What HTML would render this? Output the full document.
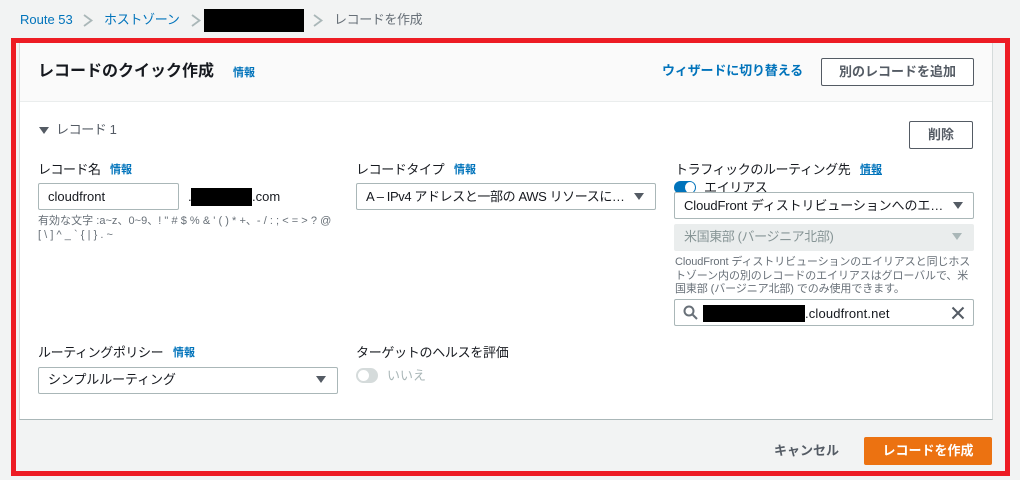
<!DOCTYPE html>
<html lang="ja"><head><meta charset="utf-8"><title>レコードを作成</title>
<style>
*{box-sizing:border-box}
html,body{margin:0;padding:0}
body{width:1020px;height:480px;position:relative;overflow:hidden;background:#f2f3f3;font-family:"Liberation Sans","Noto Sans CJK JP",sans-serif;color:#16191f;font-size:13px}
.a{position:absolute;white-space:nowrap;line-height:18px}
.l{color:#0073bb}
.i{font-size:11px;font-weight:bold;color:#0073bb}
.g{color:#687078}
.b{position:absolute;background:#000}
.box{position:absolute;background:#fff;border:1px solid #aab7b8;border-radius:2px;height:27px}
.btn{position:absolute;background:#fff;border:1px solid #545b64;border-radius:2px;color:#545b64;font-weight:bold;font-size:13px;text-align:center;line-height:26px}
.tri{position:absolute;width:0;height:0;border-left:5px solid transparent;border-right:5px solid transparent;border-top:7px solid #545b64}
svg{position:absolute}
</style></head><body>
<div class="a l" style="left:20px;top:11px">Route 53</div>
<svg style="left:83px;top:13px" width="12" height="15" fill="none" stroke="#aab7b8" stroke-width="1.8"><path d="M1 2l7.500 5.500-7.500 5.500"/></svg>
<div class="a l" style="left:104px;top:11px;letter-spacing:-.3px">ホストゾーン</div>
<svg style="left:191px;top:13px" width="12" height="15" fill="none" stroke="#aab7b8" stroke-width="1.8"><path d="M1 2l7.500 5.500-7.500 5.500"/></svg>
<div class="b" style="left:204px;top:9px;width:100px;height:23px"></div>
<svg style="left:313px;top:13px" width="12" height="15" fill="none" stroke="#aab7b8" stroke-width="1.8"><path d="M1 2l7.500 5.500-7.500 5.500"/></svg>
<div class="a g" style="left:334px;top:11px;letter-spacing:-.4px">レコードを作成</div>

<div style="position:absolute;left:19px;top:43px;width:974px;height:377px;background:#fff;border-left:1px solid #d5dbdb;border-right:1px solid #d5dbdb;border-bottom:1px solid #aab7b8"></div>
<div style="position:absolute;left:20px;top:43px;width:972px;height:59px;background:#fafafa;border-bottom:1px solid #eaeded"></div>

<div class="a" style="left:38px;top:63px;font-size:16px;font-weight:bold">レコードのクイック作成</div>
<div class="a i" style="left:233px;top:64px">情報</div>
<div class="a l" style="left:662px;top:62px;font-weight:bold;letter-spacing:-.15px">ウィザードに切り替える</div>
<div class="btn" style="left:821px;top:58px;width:153px;height:28px">別のレコードを追加</div>

<div class="tri" style="left:39px;top:127px"></div>
<div class="a" style="left:56px;top:121px;color:#545b64;letter-spacing:-.4px">レコード 1</div>
<div class="btn" style="left:909px;top:121px;width:64px;height:28px">削除</div>

<div class="a" style="left:38px;top:161px;letter-spacing:-.5px">レコード名</div>
<div class="a i" style="left:110px;top:161px">情報</div>
<div class="box" style="left:38px;top:183px;width:141px"></div>
<div class="a" style="left:48px;top:188px">cloudfront</div>
<div class="a" style="left:188px;top:188px">.</div>
<div class="b" style="left:191px;top:188px;width:61px;height:18px"></div>
<div class="a" style="left:252px;top:188px">.com</div>
<div class="a g" style="left:38px;top:214px;font-size:11px;line-height:14px;letter-spacing:.03px">有効な文字 :a~z、0~9、! " # $ % &amp; ' ( ) * +、- / : ; &lt; = &gt; ? @<br>[ \ ] ^ _ ` { | } . ~</div>

<div class="a" style="left:356px;top:161px;letter-spacing:-.4px">レコードタイプ</div>
<div class="a i" style="left:454px;top:161px">情報</div>
<div class="box" style="left:356px;top:183px;width:300px"></div>
<div class="a" style="left:366px;top:188px;letter-spacing:-.4px">A – IPv4 アドレスと一部の AWS リソースに…</div>
<div class="tri" style="left:634px;top:193px"></div>

<div class="a" style="left:675px;top:161px;letter-spacing:-.4px">トラフィックのルーティング先</div>
<div class="a i" style="left:860px;top:161px;text-decoration:underline">情報</div>
<div style="position:absolute;left:674px;top:181px;width:22px;height:13px;border-radius:7px;background:#0073bb"></div>
<div style="position:absolute;left:685px;top:182px;width:10px;height:11px;border-radius:50%;background:#fff"></div>
<div class="a" style="left:704px;top:179px;letter-spacing:-.3px">エイリアス</div>
<div class="box" style="left:674px;top:192px;width:300px"></div>
<div class="a" style="left:684px;top:197px;letter-spacing:-.1px">CloudFront ディストリビューションへのエ…</div>
<div class="tri" style="left:953px;top:202px"></div>
<div style="position:absolute;left:674px;top:224px;width:300px;height:27px;background:#eaeded;border-radius:2px"></div>
<div class="a" style="left:684px;top:228px;color:#879596;letter-spacing:-.4px">米国東部 (バージニア北部)</div>
<div class="tri" style="left:952px;top:233px;border-top-color:#aab7b8"></div>
<div class="a g" style="left:675px;top:256px;font-size:11px;line-height:13.500px;letter-spacing:-.1px">CloudFront ディストリビューションのエイリアスと同じホス<br>トゾーン内の別のレコードのエイリアスはグローバルで、米<br>国東部 (バージニア北部) でのみ使用できます。</div>
<div class="box" style="left:674px;top:299px;width:300px"></div>
<svg style="left:683px;top:305px" width="15" height="15" fill="none" stroke="#687078" stroke-width="2"><circle cx="6" cy="6" r="4.500"/><path d="M9.500 9.500l4.500 4.500"/></svg>
<div class="b" style="left:703px;top:305px;width:102px;height:17px"></div>
<div class="a" style="left:805px;top:305px;letter-spacing:.15px">.cloudfront.net</div>
<svg style="left:951px;top:306px" width="14" height="14" fill="none" stroke="#545b64" stroke-width="2"><path d="M1.500 1.500l11 11M12.500 1.500l-11 11"/></svg>

<div class="a" style="left:38px;top:344px;letter-spacing:-.4px">ルーティングポリシー</div>
<div class="a i" style="left:173px;top:344px">情報</div>
<div class="box" style="left:38px;top:367px;width:300px"></div>
<div class="a" style="left:48px;top:371px;letter-spacing:-.1px">シンプルルーティング</div>
<div class="tri" style="left:316px;top:376px"></div>
<div class="a" style="left:356px;top:344px;letter-spacing:-.3px">ターゲットのヘルスを評価</div>
<div style="position:absolute;left:356px;top:368px;width:22px;height:15px;border-radius:8px;background:#d5dbdb"></div>
<div style="position:absolute;left:358px;top:370px;width:11px;height:11px;border-radius:50%;background:#fff"></div>
<div class="a" style="left:387px;top:367px;color:#aab7b8">いいえ</div>

<div class="a" style="left:774px;top:442px;font-weight:bold;color:#545b64">キャンセル</div>
<div style="position:absolute;left:864px;top:437px;width:128px;height:28px;background:#ec7211;border-radius:2px;color:#fff;font-weight:bold;text-align:center;line-height:27px">レコードを作成</div>

<div style="position:absolute;left:11px;top:38px;width:999px;height:438px;border:5px solid #ed1c24"></div>
</body></html>
